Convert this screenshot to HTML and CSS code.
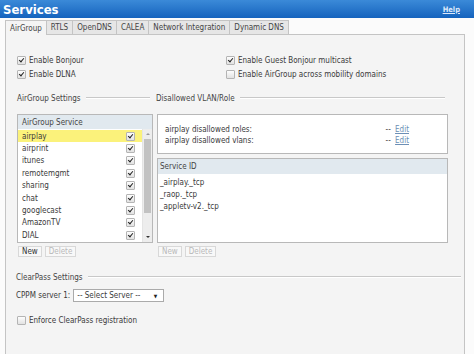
FILE: index.html
```html
<!DOCTYPE html>
<html lang="en">
<head>
    <meta charset="UTF-8">
    <title>Services</title>
    <link rel="stylesheet" href="styles.css">
</head>
<body>
    <div class="topbar">
        <span class="title">Services</span>
        <a class="help" href="#">Help</a>
    </div>

    <div class="tabs">
        <span class="tab active">AirGroup</span>
        <span class="tab">RTLS</span>
        <span class="tab">OpenDNS</span>
        <span class="tab">CALEA</span>
        <span class="tab">Network Integration</span>
        <span class="tab">Dynamic DNS</span>
    </div>

    <div class="panel">
        <div class="checks">
            <label class="check"><span class="cb on"></span>Enable Bonjour</label>
            <label class="check"><span class="cb on"></span>Enable Guest Bonjour multicast</label>
            <label class="check"><span class="cb on"></span>Enable DLNA</label>
            <label class="check"><span class="cb"></span>Enable AirGroup across mobility domains</label>
        </div>

        <div class="sections">
            <div class="legend left-legend"><span>AirGroup Settings</span><i></i></div>
            <div class="legend right-legend"><span>Disallowed VLAN/Role</span><i></i></div>
        </div>

        <div class="lists">
            <div class="col-left">
                <div class="box service-box">
                    <div class="box-head">AirGroup Service</div>
                    <div class="scroll-area">
                        <div class="rows">
                            <div class="row selected"><span>airplay</span><span class="cb on"></span></div>
                            <div class="row"><span>airprint</span><span class="cb on"></span></div>
                            <div class="row"><span>itunes</span><span class="cb on"></span></div>
                            <div class="row"><span>remotemgmt</span><span class="cb on"></span></div>
                            <div class="row"><span>sharing</span><span class="cb on"></span></div>
                            <div class="row"><span>chat</span><span class="cb on"></span></div>
                            <div class="row"><span>googlecast</span><span class="cb on"></span></div>
                            <div class="row"><span>AmazonTV</span><span class="cb on"></span></div>
                            <div class="row"><span>DIAL</span><span class="cb on"></span></div>
                        </div>
                        <div class="scrollbar">
                            <span class="arrow up"></span>
                            <span class="thumb"></span>
                            <span class="arrow down"></span>
                        </div>
                    </div>
                </div>
                <div class="buttons">
                    <span class="btn">New</span>
                    <span class="btn disabled">Delete</span>
                </div>
            </div>

            <div class="col-right">
                <div class="box roles-box">
                    <div class="role-line"><span>airplay disallowed roles:</span><span class="edit">-- <a href="#">Edit</a></span></div>
                    <div class="role-line"><span>airplay disallowed vlans:</span><span class="edit">-- <a href="#">Edit</a></span></div>
                </div>
                <div class="box id-box">
                    <div class="box-head tall">Service ID</div>
                    <div class="id-row">_airplay._tcp</div>
                    <div class="id-row">_raop._tcp</div>
                    <div class="id-row">_appletv-v2._tcp</div>
                </div>
                <div class="buttons">
                    <span class="btn disabled">New</span>
                    <span class="btn disabled">Delete</span>
                </div>
            </div>
        </div>

        <div class="legend clearpass"><span>ClearPass Settings</span><i></i></div>

        <div class="server-row">
            <span>CPPM server 1:</span>
            <span class="select">-- Select Server --<b>&#9660;</b></span>
        </div>

        <label class="check enforce"><span class="cb"></span>Enforce ClearPass registration</label>
    </div>
</body>
</html>
```

FILE: styles.css
```css
body {
    margin: 0;
    width: 474px;
    height: 354px;
    overflow: hidden;
    background-color: #fbfbfb;
    font-family: "DejaVu Sans Condensed", "DejaVu Sans", sans-serif;
    font-size: 8px;
    color: #3a3a3a;
}

.topbar {
    height: 18px;
    background: linear-gradient(#3b8ad8, #1563bd);
    display: flex;
    align-items: center;
    justify-content: space-between;
    padding: 0 14px 0 3px;
}

.title {
    color: white;
    font-family: "DejaVu Sans Condensed", "DejaVu Sans", sans-serif;
    font-weight: bold;
    font-size: 13px;
}

.help {
    color: #dce9fb;
    font-size: 7.5px;
    font-weight: bold;
}

.tabs {
    display: flex;
    margin-top: 2px;
    padding-left: 5px;
    height: 14px;
}

.tab {
    display: flex;
    align-items: center;
    padding: 0 4px;
    background-color: #e6e6e6;
    border: 1px solid #c4c4c4;
    border-left: none;
    border-bottom: none;
    color: #444;
    box-sizing: border-box;
}

.tab.active {
    background-color: #f4f4f4;
    border-left: 1px solid #c4c4c4;
    position: relative;
    z-index: 1;
    height: 15px;
}

.panel {
    margin: 0 9px 0 5px;
    height: 320px;
    box-sizing: border-box;
    border: 1px solid #c4c4c4;
    border-bottom: none;
    background-color: #f4f4f4;
    padding: 20px 0 0 11px;
}

.checks {
    display: grid;
    grid-template-columns: 209px auto;
    row-gap: 4px;
}

.check {
    display: flex;
    align-items: center;
    height: 10px;
    gap: 3px;
}

.cb {
    width: 7px;
    height: 7px;
    border: 1px solid #b4b4b4;
    border-radius: 1px;
    background: linear-gradient(#fdfdfd, #e2e2e2);
    display: inline-block;
    position: relative;
    flex: none;
}

.cb.on::after {
    content: "";
    position: absolute;
    left: 2px;
    top: 0px;
    width: 2px;
    height: 4px;
    border: solid #222;
    border-width: 0 1.5px 1.5px 0;
    transform: rotate(40deg);
}

.sections {
    display: flex;
    margin-top: 14px;
    height: 10px;
}

.legend {
    display: flex;
    align-items: center;
    gap: 5px;
    color: #444;
}

.legend i {
    display: block;
    height: 1px;
    background-color: #c8c8c8;
    border-bottom: 1px solid #fff;
}

.left-legend {
    width: 139px;
}

.left-legend i {
    width: 64px;
}

.right-legend i {
    width: 205px;
}

.lists {
    display: flex;
    gap: 4px;
    margin-top: 11px;
}

.box {
    border: 1px solid #b8b8b8;
    background-color: #fff;
    box-sizing: border-box;
}

.service-box {
    width: 136px;
    height: 129px;
}

.box-head {
    height: 14px;
    background-color: #e1e9ef;
    display: flex;
    align-items: center;
    padding-left: 4px;
    color: #444;
}

.box-head.tall {
    height: 15px;
    padding-left: 2px;
}

.scroll-area {
    display: flex;
    height: 113px;
}

.rows {
    flex: 1;
    padding-top: 1px;
}

.row {
    height: 12.4px;
    display: flex;
    align-items: center;
    justify-content: space-between;
    padding: 0 7px 0 4px;
}

.row.selected {
    background-color: #fbf27b;
}

.scrollbar {
    width: 9px;
    background-color: #ededed;
    display: flex;
    flex-direction: column;
    align-items: center;
    border-left: 1px solid #e4e4e4;
}

.arrow {
    width: 0;
    height: 0;
    border-left: 2px solid transparent;
    border-right: 2px solid transparent;
    margin: 4px 0;
}

.arrow.up {
    border-bottom: 2px solid #999;
}

.arrow.down {
    border-top: 2px solid #333;
    margin-top: auto;
}

.thumb {
    width: 7px;
    height: 74px;
    background-color: #c2c2c2;
}

.buttons {
    display: flex;
    gap: 3px;
    margin-top: 3px;
    padding-left: 1px;
}

.btn {
    height: 11px;
    padding: 0 3px;
    display: flex;
    align-items: center;
    border: 1px solid #d8d8d8;
    background-color: #f8f8f8;
    color: #333;
    box-sizing: border-box;
}

.btn.disabled {
    color: #b8b8b8;
}

.col-right {
    width: 291px;
}

.roles-box {
    height: 40px;
    padding: 9px 38px 0 7px;
}

.role-line {
    display: flex;
    justify-content: space-between;
    height: 11px;
    align-items: center;
}

.edit a {
    color: #6d8fb5;
    margin-left: 2px;
}

.id-box {
    margin-top: 4px;
    height: 85px;
}

.id-row {
    height: 12px;
    display: flex;
    align-items: center;
    padding-left: 2px;
}

.box-head + .id-row {
    margin-top: 2px;
}

.clearpass {
    margin-top: 14px;
    margin-left: -1px;
    height: 12px;
}

.clearpass i {
    width: 373px;
}

.server-row {
    display: flex;
    align-items: center;
    gap: 3px;
    margin-top: 6px;
    margin-left: -1px;
}

.select {
    width: 91px;
    height: 13px;
    box-sizing: border-box;
    border: 1px solid #aaa;
    background-color: #fff;
    display: flex;
    align-items: center;
    justify-content: space-between;
    padding: 0 6px 0 3px;
}

.select b {
    font-size: 5px;
    color: #222;
}

.enforce {
    margin-top: 13px;
}
```
